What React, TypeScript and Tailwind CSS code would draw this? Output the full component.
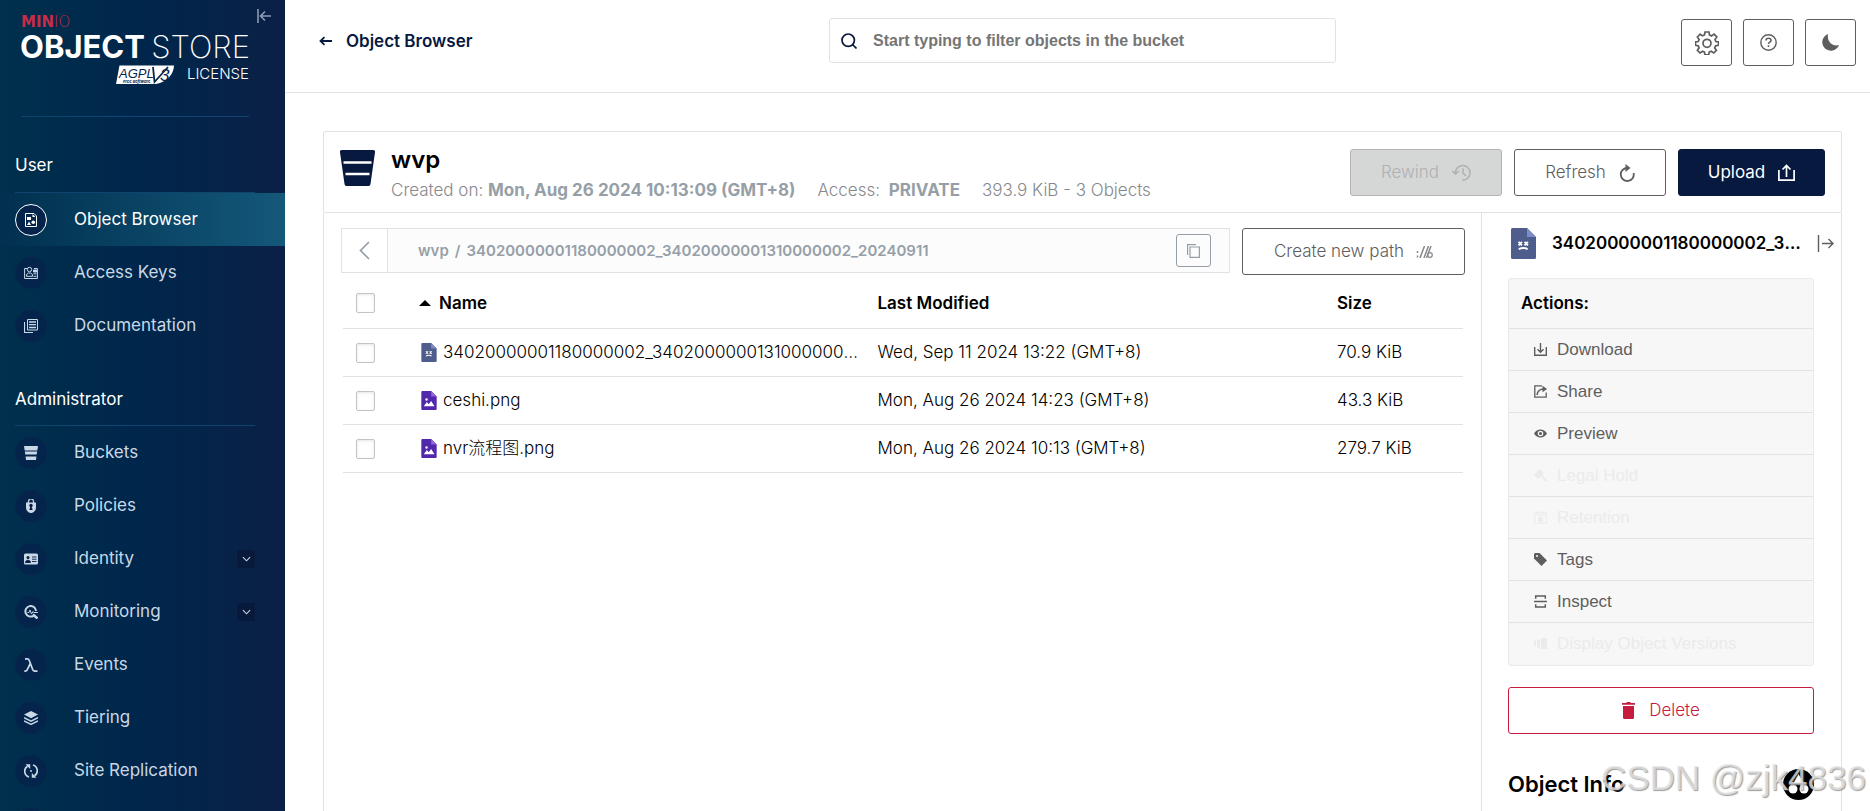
import type { ReactNode } from 'react'

type IconName =
  | 'browser' | 'keys' | 'docs' | 'bucket' | 'policy' | 'identity'
  | 'monitoring' | 'lambda' | 'tiers' | 'replication' | 'settings'

interface MenuEntry {
  label: string
  icon: IconName
  active?: boolean
  expandable?: boolean
}

const userMenu: MenuEntry[] = [
  { label: 'Object Browser', icon: 'browser', active: true },
  { label: 'Access Keys', icon: 'keys' },
  { label: 'Documentation', icon: 'docs' },
]

const adminMenu: MenuEntry[] = [
  { label: 'Buckets', icon: 'bucket' },
  { label: 'Policies', icon: 'policy' },
  { label: 'Identity', icon: 'identity', expandable: true },
  { label: 'Monitoring', icon: 'monitoring', expandable: true },
  { label: 'Events', icon: 'lambda' },
  { label: 'Tiering', icon: 'tiers' },
  { label: 'Site Replication', icon: 'replication' },
  { label: 'Settings', icon: 'settings' },
]

const files = [
  { name: '34020000001180000002_34020000001310000002_20240911', kind: 'broken', modified: 'Wed, Sep 11 2024 13:22 (GMT+8)', size: '70.9 KiB' },
  { name: 'ceshi.png', kind: 'image', modified: 'Mon, Aug 26 2024 14:23 (GMT+8)', size: '43.3 KiB' },
  { name: 'nvr流程图.png', kind: 'image', modified: 'Mon, Aug 26 2024 10:13 (GMT+8)', size: '279.7 KiB' },
]

// 14x14 glyphs used inside the round menu badges
const menuIcons: Record<IconName, ReactNode> = {
  browser: (
    <>
      <path d="M1.500.5h8.500l2.500 2.500v10.500h-11z" fill="none" stroke="currentColor" strokeWidth="1" />
      <path d="M3 4h4v3H3zM8.500 1v3h3zM3 12l2-3.500 2 3.500z" fill="currentColor" />
      <circle cx="9.300" cy="9.300" r="1.800" fill="currentColor" />
    </>
  ),
  keys: (
    <>
      <path d="M3 2.500H.6v10h12.800v-10H10" fill="none" stroke="currentColor" strokeWidth="1" />
      <circle cx="5.500" cy="3.500" r="2.200" fill="none" stroke="currentColor" strokeWidth="1" />
      <path d="M2.500 10.300V8.500L4.500 7h2l2 1.500v1.800z" fill="none" stroke="currentColor" strokeWidth="1" />
      <path d="M9.500 4h3v2h-3zM9.500 7.800h3M9.500 10.300h3" fill="currentColor" stroke="currentColor" strokeWidth="1" />
    </>
  ),
  docs: (
    <>
      <path d="M3.500.5h10v10.500h-10z" fill="none" stroke="currentColor" strokeWidth="1" />
      <path d="M.5 3v10.500H9" fill="none" stroke="currentColor" strokeWidth="1.200" />
      <path d="M5 3h7M5 5.700h7M5 8.500h7" stroke="currentColor" strokeWidth="1.300" />
    </>
  ),
  bucket: (
    <>
      <path d="M0 0h14l-.6 4H.6zM.9 6h12.200l-.4 2.600H1.300zM1.600 10.600h10.800L12 14H2z" fill="currentColor" />
      <path d="M.7 4h12.600v2H.9z" fill="currentColor" opacity=".5" />
    </>
  ),
  policy: (
    <>
      <path d="M4.500 4V2.500a2.500 2.500 0 015 0V4" fill="none" stroke="currentColor" strokeWidth="1.200" />
      <path d="M2 3.500h10v5C12 11.500 9.500 14 7 14s-5-2.500-5-5.500z" fill="currentColor" />
      <path d="M5.300 11h3.400L7.700 8h-1.400z" fill="#081c42" />
      <circle cx="7" cy="6.500" r="1.700" fill="#081c42" />
    </>
  ),
  identity: (
    <>
      <rect x="0" y="1.500" width="14" height="11" rx="1.500" fill="currentColor" />
      <circle cx="4" cy="5.500" r="1.500" fill="#081c42" />
      <path d="M1.500 10.500c0-3 5-3 5 0zM8 5h4.500M8 7.200h4.500M8 9.500h4.500" fill="#081c42" stroke="#081c42" strokeWidth=".9" />
    </>
  ),
  monitoring: (
    <>
      <path d="M9.500 10.800A5.300 5.300 0 1112 6" fill="none" stroke="currentColor" strokeWidth="2" />
      <path d="M3.500 7.500h1.500l1-2.500 1.500 4L9 6.500l.8 1h4" fill="none" stroke="currentColor" strokeWidth="1" />
      <path d="M9 9.500l4.500 4" stroke="currentColor" strokeWidth="2.400" />
    </>
  ),
  lambda: <path d="M1 .9h2.600c1.200 0 1.500 1 2 2.300l3 8.200c.6 1.500 1.200 1.800 2.500 1.800h2.400M6.300 5.500L3 12.200c-.5 1-1.200 1-2.700 1" fill="none" stroke="currentColor" strokeWidth="1.700" />,
  tiers: (
    <>
      <path d="M7 0l7 3.600-7 3.600L0 3.600z" fill="currentColor" />
      <path d="M0 6.700L7 10.200l7-3.500M0 9.900l7 3.500 7-3.500" fill="none" stroke="currentColor" strokeWidth="1.400" />
    </>
  ),
  replication: (
    <>
      <path d="M5 13A6 6 0 013.500 2.200M9 1A6 6 0 0110.500 11.800" fill="none" stroke="currentColor" strokeWidth="1.700" />
      <path d="M1.500.3h4.700V5zM12.500 13.700H7.800V9z" fill="currentColor" />
      <circle cx="7" cy="7" r="1" fill="currentColor" />
    </>
  ),
  settings: <circle cx="7" cy="7" r="4" fill="none" stroke="currentColor" strokeWidth="2" />,
}

function MenuItem({ label, icon, active, expandable }: MenuEntry) {
  return (
    <li>
      <a
        href="#"
        className={`flex h-[53px] items-center pr-[30px] pl-[15px] ${active ? 'bg-linear-to-r from-[#02304f] to-[#14587a] text-white' : 'text-[#c9d8e6]'}`}
      >
        <span className={`flex size-8 items-center justify-center rounded-full border bg-[#04244c] ${active ? 'border-white' : 'border-[#08244a]'}`}>
          <svg viewBox="0 0 14 14" className="size-[14px]">{menuIcons[icon]}</svg>
        </span>
        <span className="ml-[27px] text-[17px]">{label}</span>
        {expandable && (
          <span className="ml-auto flex size-[18px] items-center justify-center rounded-xs bg-[#081a3b]">
            <svg viewBox="0 0 10 6" className="h-[6px] w-[9px]">
              <path d="M1 1l4 4 4-4" fill="none" stroke="currentColor" strokeWidth="1.200" />
            </svg>
          </span>
        )}
      </a>
    </li>
  )
}

function Logo() {
  return (
    <svg viewBox="0 -8 230 80" className="h-20 w-[230px]" role="img" aria-label="MinIO Object Store">
      <text x="0" y="11" fill="#c72c48" fontSize="15" fontWeight="700" fontFamily="'DejaVu Sans', sans-serif">
        MIN<tspan fontWeight="200">IO</tspan>
      </text>
      <text x="-1" y="42" fill="#fff" fontSize="31" fontWeight="700" fontFamily="Inter, sans-serif">OBJECT</text>
      <text x="229" y="42" fill="#fff" fontSize="31" fontWeight="200" textAnchor="end" fontFamily="Inter, sans-serif">STORE</text>
      <path d="M98.500 49.500H153c0 8-7 17-18 18.500H95z" fill="#fff" />
      <text x="98" y="62" fill="#06254a" fontSize="13" fontStyle="italic" fontWeight="500" fontFamily="'Liberation Sans', sans-serif">AGPL</text>
      <text x="102" y="67" fill="#06254a" fontSize="4" fontStyle="italic" fontWeight="700" fontFamily="Inter, sans-serif">Free Software</text>
      <path d="M132 51l1.500 15L147 51" fill="none" stroke="#06254a" strokeWidth="1.800" />
      <text x="139" y="65" fill="#06254a" fontSize="17" fontStyle="italic" fontFamily="'Liberation Sans', sans-serif">3</text>
      <text x="228" y="63" fill="#fff" fontSize="15" fontWeight="300" textAnchor="end" fontFamily="Inter, sans-serif">LICENSE</text>
    </svg>
  )
}

function FileIcon({ kind, className }: { kind: string; className: string }) {
  const broken = kind === 'broken'
  return (
    <svg viewBox="0 0 25 31" className={className}>
      <path d="M1.500 0H16l9 9v20.500a1.500 1.500 0 01-1.500 1.500h-22A1.500 1.500 0 010 29.500v-28A1.500 1.500 0 011.500 0z" fill={broken ? '#4f5d8c' : '#5127ac'} />
      <path d="M16 0l9 9h-9z" fill={broken ? '#7c8cc4' : '#8f66dd'} />
      {broken ? (
        <path d="M7.500 13.800l3.500 3.500m0-3.500l-3.500 3.500M13.500 13.800l3.500 3.500m0-3.500l-3.500 3.500M8 21.500c1-2 7.500-2 8.500 0" fill="none" stroke="#fff" strokeWidth="1.900" />
      ) : (
        <path d="M4 25l5-7 3 3.500 4-5 5.500 8.500zM6.500 14a2 2 0 104 0 2 2 0 10-4 0" fill="#fff" />
      )}
    </svg>
  )
}

const actions: { label: string; disabled?: boolean; icon: ReactNode }[] = [
  {
    label: 'Download',
    icon: <path d="M.7 4v8.300h11.600V4M6.500 0v9M3.500 6.300l3 3 3-3" fill="none" stroke="currentColor" strokeWidth="1.400" />,
  },
  {
    label: 'Share',
    icon: (
      <>
        <path d="M8 .8H.8v11.400h11.400V7.500" fill="none" stroke="currentColor" strokeWidth="1.300" />
        <path d="M3 10c.5-4 3-6 7-6" fill="none" stroke="currentColor" strokeWidth="1.500" />
        <path d="M8.500.7L13 4 8.500 7.300z" fill="currentColor" />
      </>
    ),
  },
  {
    label: 'Preview',
    icon: (
      <>
        <path d="M0 6.500C3 1.200 10 1.200 13 6.500 10 11.800 3 11.800 0 6.500z" fill="currentColor" />
        <circle cx="6.500" cy="6.500" r="2.200" fill="none" stroke="#f7f7f7" strokeWidth="1.200" />
      </>
    ),
  },
  {
    label: 'Legal Hold',
    disabled: true,
    icon: <path d="M0 6l5.500-6L10 4.500 4.500 9.500zM6.500 6.500L8 5.500l5 6-1.500 1.500z" fill="currentColor" />,
  },
  {
    label: 'Retention',
    disabled: true,
    icon: (
      <>
        <path d="M.7 1.700h11.600v10.600H.7zM1 4h11M4 0v3M9 0v3" fill="none" stroke="currentColor" strokeWidth="1" />
        <path d="M4.500 7.500h4v3h-4zM5.300 7.500V6h2.400v1.500" fill="currentColor" stroke="currentColor" strokeWidth=".8" />
      </>
    ),
  },
  {
    label: 'Tags',
    icon: (
      <>
        <path d="M0 1l1-1h4.500L13 7.500 7.500 13 0 5.500z" fill="currentColor" />
        <circle cx="3" cy="3" r="1" fill="#f7f7f7" />
      </>
    ),
  },
  {
    label: 'Inspect',
    icon: (
      <>
        <path d="M1.700 3.800V1h9.600v2.800M1.700 9.200V12h9.600V9.200" fill="none" stroke="currentColor" strokeWidth="1.500" />
        <path d="M0 6.500h13" stroke="currentColor" strokeWidth="1.500" />
      </>
    ),
  },
  {
    label: 'Display Object Versions',
    disabled: true,
    icon: <path d="M0 3.500h2v6H0zM3 2.500h3v8H3zM7 1h6v11H7z" fill="currentColor" />,
  },
]

function Sidebar() {
  return (
    <aside className="relative w-[285px] shrink-0 overflow-hidden bg-linear-to-r from-[#00304d] via-[#00264b] to-[#0b2046]">
      <button type="button" aria-label="Collapse menu" className="absolute top-[9px] right-[14px] text-[#8b9db2]">
        <svg viewBox="0 0 14 14" className="size-[14px]">
          <path d="M1 0v14M14 7H4M8 2.500L3.500 7 8 11.500" fill="none" stroke="currentColor" strokeWidth="1.600" />
        </svg>
      </button>
      <div className="mr-9 ml-[21px] border-b border-[#0f446f] pt-2 pb-7">
        <Logo />
      </div>
      <nav className="text-white">
        <h2 className="mr-[30px] ml-[15px] border-b border-[#0f446f] pt-9 pb-[15px] text-[17px] leading-6">User</h2>
        <ul>
          {userMenu.map((item) => <MenuItem key={item.label} {...item} />)}
        </ul>
        <h2 className="mr-[30px] ml-[15px] border-b border-[#0f446f] pt-[35px] pb-[14px] text-[17px] leading-6">Administrator</h2>
        <ul>
          {adminMenu.map((item) => <MenuItem key={item.label} {...item} />)}
        </ul>
      </nav>
    </aside>
  )
}

function TopBar() {
  const iconButton = 'flex h-[47px] w-[51px] items-center justify-center rounded-[3px] border border-[#5e5e5e] text-[#5e5e5e]'
  return (
    <header className="flex h-[93px] items-start justify-between border-b border-[#e2e2e2] pr-[14px] pl-[34px]">
      <a href="#" className="mt-7 flex w-[500px] items-center gap-[14px] text-[17px] leading-[26px] font-semibold text-[#07193e]">
        <svg viewBox="0 0 13 10" className="h-[10px] w-[13px]">
          <path d="M13 5H2M5.500 1.200L1.500 5l4 3.800" fill="none" stroke="currentColor" strokeWidth="1.800" />
        </svg>
        Object Browser
      </a>
      <label className="mt-[18px] flex h-[45px] w-[507px] items-center gap-4 rounded-[3px] border border-[#e2e2e2] px-[11px]">
        <svg viewBox="0 0 16 16" className="size-4">
          <circle cx="7.200" cy="7.200" r="6.200" fill="none" stroke="#07193e" strokeWidth="1.700" />
          <path d="M11.500 11.500l4 4" stroke="#07193e" strokeWidth="1.700" />
        </svg>
        <input
          type="text"
          aria-label="Filter objects"
          placeholder="Start typing to filter objects in the bucket"
          className="min-w-0 flex-1 font-['Liberation_Sans',sans-serif] text-base font-bold outline-none placeholder:text-[#757575]"
        />
      </label>
      <div className="mt-[19px] flex w-[510px] justify-end gap-[11px]">
        <button type="button" aria-label="Settings" className={iconButton}>
          <svg viewBox="0 0 24 24" className="size-6" fill="none" stroke="currentColor" strokeWidth="1.700">
            <path d="M10 1h4l.5 3 2 .9 2.500-1.800 2.800 2.800L20 8.500l.9 2 2.600.4v3.400l-2.900.5-.9 2 1.700 2.500-2.700 2.700-2.500-1.700-2 .9-.5 2.700h-3.800l-.4-2.700-2-.9-2.500 1.700-2.600-2.700 1.700-2.500-.9-2-2.700-.5v-3.400l2.700-.4.9-2L2.400 6l2.700-2.800L7.500 4.900l2-.9z" />
            <circle cx="12" cy="12.300" r="4" />
          </svg>
        </button>
        <button type="button" aria-label="Help" className={iconButton}>
          <svg viewBox="0 0 17 17" className="size-[17px]" fill="none" stroke="currentColor">
            <circle cx="8.500" cy="8.500" r="7.700" strokeWidth="1.400" />
            <path d="M6 6.500c0-3 5-3 5 0 0 1.800-2.500 1.600-2.500 3.500M8.500 11.200v1.800" strokeWidth="1.600" />
          </svg>
        </button>
        <button type="button" aria-label="Dark mode" className={iconButton}>
          <svg viewBox="0 0 17 17" className="size-[17px]">
            <path d="M6 0a8.600 8.600 0 1011 11C11 13 4.500 8 6 0z" fill="currentColor" />
          </svg>
        </button>
      </div>
    </header>
  )
}

function BucketHeader() {
  const button = 'flex h-[47px] items-center justify-center gap-[13px] rounded-[3px] border text-[17px]'
  return (
    <section className="flex h-[82px] items-start rounded-xs border border-[#e2e2e2] px-4">
      <svg viewBox="0 0 35 36" className="mt-[18px] h-9 w-[35px]">
        <path d="M2 0h31a2 2 0 012 2.300L30.500 34a2 2 0 01-2 2h-22a2 2 0 01-2-2L0 2.300A2 2 0 012 0z" fill="#07193e" />
        <path d="M3.500 12.500h28M5.500 24h24" stroke="#fff" strokeWidth="2.500" />
      </svg>
      <div className="mt-[14px] ml-4 flex-1">
        <h1 className="text-2xl leading-7 font-semibold text-black">wvp</h1>
        <p className="flex gap-[22px] text-[17px] leading-8 font-light text-[#87888d]">
          <span>Created on: <strong className="font-bold text-[#969fa8]">Mon, Aug 26 2024 10:13:09 (GMT+8)</strong></span>
          <span>Access: <strong className="ml-1 font-bold text-[#969fa8]">PRIVATE</strong></span>
          <span>393.9 KiB - 3 Objects</span>
        </p>
      </div>
      <div className="mt-[17px] flex gap-3">
        <button type="button" disabled className={`${button} w-[152px] border-[#b4b4b4] bg-[#d5d7d7] font-light text-[#b0b0b0]`}>
          Rewind
          <svg viewBox="0 0 19 17" className="h-[17px] w-[19px]" fill="none" stroke="currentColor" strokeWidth="1.600">
            <path d="M3.500 9.500a7.300 7.300 0 117 6.600M11 4.500v4.500l3 3M0 7l3.500 3L7 7" />
          </svg>
        </button>
        <button type="button" className={`${button} w-[152px] border-[#5e5e5e] font-light text-[#5e5e5e]`}>
          Refresh
          <svg viewBox="0 0 16 18" className="h-[18px] w-4">
            <path d="M8.500 4A6.500 6.500 0 1014.600 9" fill="none" stroke="currentColor" strokeWidth="1.800" />
            <path d="M6.500 0l5 4-5 4z" fill="currentColor" />
          </svg>
        </button>
        <button type="button" className={`${button} w-[147px] border-[#07193e] bg-[#07193e] text-white`}>
          Upload
          <svg viewBox="0 0 17 17" className="size-[17px]" fill="none" stroke="currentColor" strokeWidth="1.700">
            <path d="M.9 6v10.100h15.200V6M8.500 13V1.500M4.500 5.500l4-4 4 4" />
          </svg>
        </button>
      </div>
    </section>
  )
}

function ObjectList() {
  const checkbox = 'block h-5 w-[19px] appearance-none rounded-xs border border-[#c3c4c6] bg-white shadow-[inset_0_1px_3px_rgba(0,0,0,0.1)]'
  return (
    <section className="min-w-0 flex-1 border-r border-[#e2e2e2] px-4 pt-[15px]">
      <div className="ml-px flex items-start gap-3">
        <div className="flex h-[45px] flex-1 items-center border border-[#e2e2e2] bg-[#fcfcfc]">
          <button type="button" aria-label="Back" className="flex h-full w-[46px] items-center justify-center border-r border-[#e2e2e2] bg-white text-[#969fa8]">
            <svg viewBox="0 0 11 19" className="h-[19px] w-[11px]">
              <path d="M10 1L1.500 9.500 10 18" fill="none" stroke="currentColor" strokeWidth="1.700" />
            </svg>
          </button>
          <p className="ml-[30px] flex gap-[6px] pt-[2px] text-[15px] font-semibold text-[#969fa8]">
            <a href="#">wvp</a>
            <span>/</span>
            <a href="#">34020000001180000002_34020000001310000002_20240911</a>
          </p>
          <button type="button" aria-label="Copy path" className="mr-[18px] ml-auto flex h-[33px] w-[35px] items-center justify-center rounded-[3px] border border-[#969fa8] text-[#969fa8]">
            <svg viewBox="0 0 13 14" className="h-[14px] w-[13px]" fill="none" stroke="currentColor">
              <path d="M.6 11V.6h8.400M3 3h9.400v10.400H3z" strokeWidth="1.200" />
            </svg>
          </button>
        </div>
        <button type="button" className="flex h-[47px] w-[223px] items-center justify-center gap-3 rounded-[3px] border border-[#5e5e5e] text-[17px] font-light text-[#5e5e5e]">
          Create new path
          <svg viewBox="0 0 17 12" className="h-3 w-[17px] text-[#87888d]" fill="none" stroke="currentColor">
            <path d="M1.500 5v2M1.500 9.500v2M4 12L8.500 0M8 12l4.500-12M10.500 12L15 0" strokeWidth="1.500" />
            <circle cx="14" cy="9" r="2.300" strokeWidth="1.200" />
          </svg>
        </button>
      </div>
      <table className="mx-[3px] w-[calc(100%-5px)] table-fixed text-left text-[17px] text-black">
        <thead>
          <tr className="h-[53px] border-b border-[#e2e2e2]">
            <th className="w-[74px] pt-1 pl-[13px]"><input type="checkbox" aria-label="Select all" className={checkbox} /></th>
            <th className="pt-1 font-semibold">
              <span className="flex items-center gap-2 pl-[2px]">
                <svg viewBox="0 0 12 6" className="h-[6px] w-3"><path d="M0 6l6-6 6 6z" fill="#000" /></svg>
                Name
              </span>
            </th>
            <th className="pt-1 pl-px font-semibold">Last Modified</th>
            <th className="w-[127px] pt-1 pl-px font-semibold">Size</th>
          </tr>
        </thead>
        <tbody className="font-light">
          {files.map((file) => (
            <tr key={file.name} className="h-12 border-b border-[#e2e2e2]">
              <td className="pt-px pl-[13px]"><input type="checkbox" aria-label={`Select ${file.name}`} className={checkbox} /></td>
              <td className="pt-px">
                <span className="flex items-center gap-[6px] pr-3 pl-1">
                  <FileIcon kind={file.kind} className="h-[19px] w-4 shrink-0" />
                  <span className="truncate">{file.name}</span>
                </span>
              </td>
              <td className="pt-px pl-px">{file.modified}</td>
              <td className="pt-px pl-px">{file.size}</td>
            </tr>
          ))}
        </tbody>
      </table>
    </section>
  )
}

function ObjectDetails() {
  return (
    <section className="w-[359px] shrink-0 pr-[27px] pl-[26px]">
      <div className="-mr-5 flex h-[65px] items-center pb-1">
        <FileIcon kind="broken" className="ml-[3px] h-[31px] w-[25px] shrink-0" />
        <h2 className="mr-3 ml-4 truncate text-[17px] font-semibold text-black">34020000001180000002_34020000001310000002_20240911</h2>
        <button type="button" aria-label="Close details" className="shrink-0 text-[#5e5e5e]">
          <svg viewBox="0 0 17 17" className="size-[17px]">
            <path d="M1.500 0v17M5 8.500h11M11.500 4l4.500 4.500-4.500 4.500" fill="none" stroke="currentColor" strokeWidth="1.400" />
          </svg>
        </button>
      </div>
      <div className="rounded-[3px] border border-[#eaeaea] bg-[#f7f7f7] pb-px">
        <h3 className="px-3 pt-3 pb-[13px] text-[17px] leading-6 font-semibold text-black">Actions:</h3>
        <ul>
          {actions.map((action) => (
            <li key={action.label} className="border-t border-[#e2e2e2]">
              <button
                type="button"
                disabled={action.disabled}
                className={`flex h-[41px] w-full items-center gap-[10px] pl-[25px] font-['Liberation_Sans',sans-serif] text-[17px] ${action.disabled ? 'text-[#ebebeb]' : 'text-[#5e5e5e]'}`}
              >
                <svg viewBox="0 0 13 13" className="size-[13px]">{action.icon}</svg>
                {action.label}
              </button>
            </li>
          ))}
        </ul>
      </div>
      <button type="button" className="mt-[21px] flex h-[47px] w-full items-center justify-center gap-[14px] rounded-[3px] border border-[#c51b3f] text-[17px] font-light text-[#c51b3f]">
        <svg viewBox="0 0 13 17" className="h-[17px] w-[13px]">
          <path d="M0 1h4l1-1h3l1 1h4v1.800H0zM1 4h11v11.500a1.500 1.500 0 01-1.500 1.500h-8A1.500 1.500 0 011 15.500z" fill="currentColor" />
        </svg>
        Delete
      </button>
      <div className="mt-[34px] flex items-center justify-between">
        <h2 className="text-[22px] leading-8 font-semibold text-black">Object Info</h2>
        <svg viewBox="0 0 31 31" className="size-[31px]">
          <circle cx="15.500" cy="15.500" r="15.500" fill="#000" />
          <path d="M15.500 5l5 9h-10z" fill="#fff" />
          <circle cx="10" cy="20" r="4.500" fill="#fff" />
          <circle cx="21" cy="20" r="4.500" fill="#fff" />
        </svg>
      </div>
    </section>
  )
}

export default function App() {
  return (
    <div className="relative flex h-screen overflow-hidden bg-white font-[Inter,'Noto_Sans_CJK_SC',sans-serif]">
      <Sidebar />
      <main className="flex min-w-0 flex-1 flex-col">
        <TopBar />
        <div className="flex min-h-0 flex-1 flex-col pt-[38px] pr-7 pl-[38px]">
          <BucketHeader />
          <div className="flex flex-1 border-x border-[#e2e2e2]">
            <ObjectList />
            <ObjectDetails />
          </div>
        </div>
      </main>
      <p className="pointer-events-none absolute right-1 bottom-[9px] font-['Liberation_Sans',sans-serif] text-[35px] leading-[48px] text-[#e4e4e4]/80 [text-shadow:1px_1px_1px_rgba(90,90,90,0.6)]">
        CSDN @zjk4836
      </p>
    </div>
  )
}
